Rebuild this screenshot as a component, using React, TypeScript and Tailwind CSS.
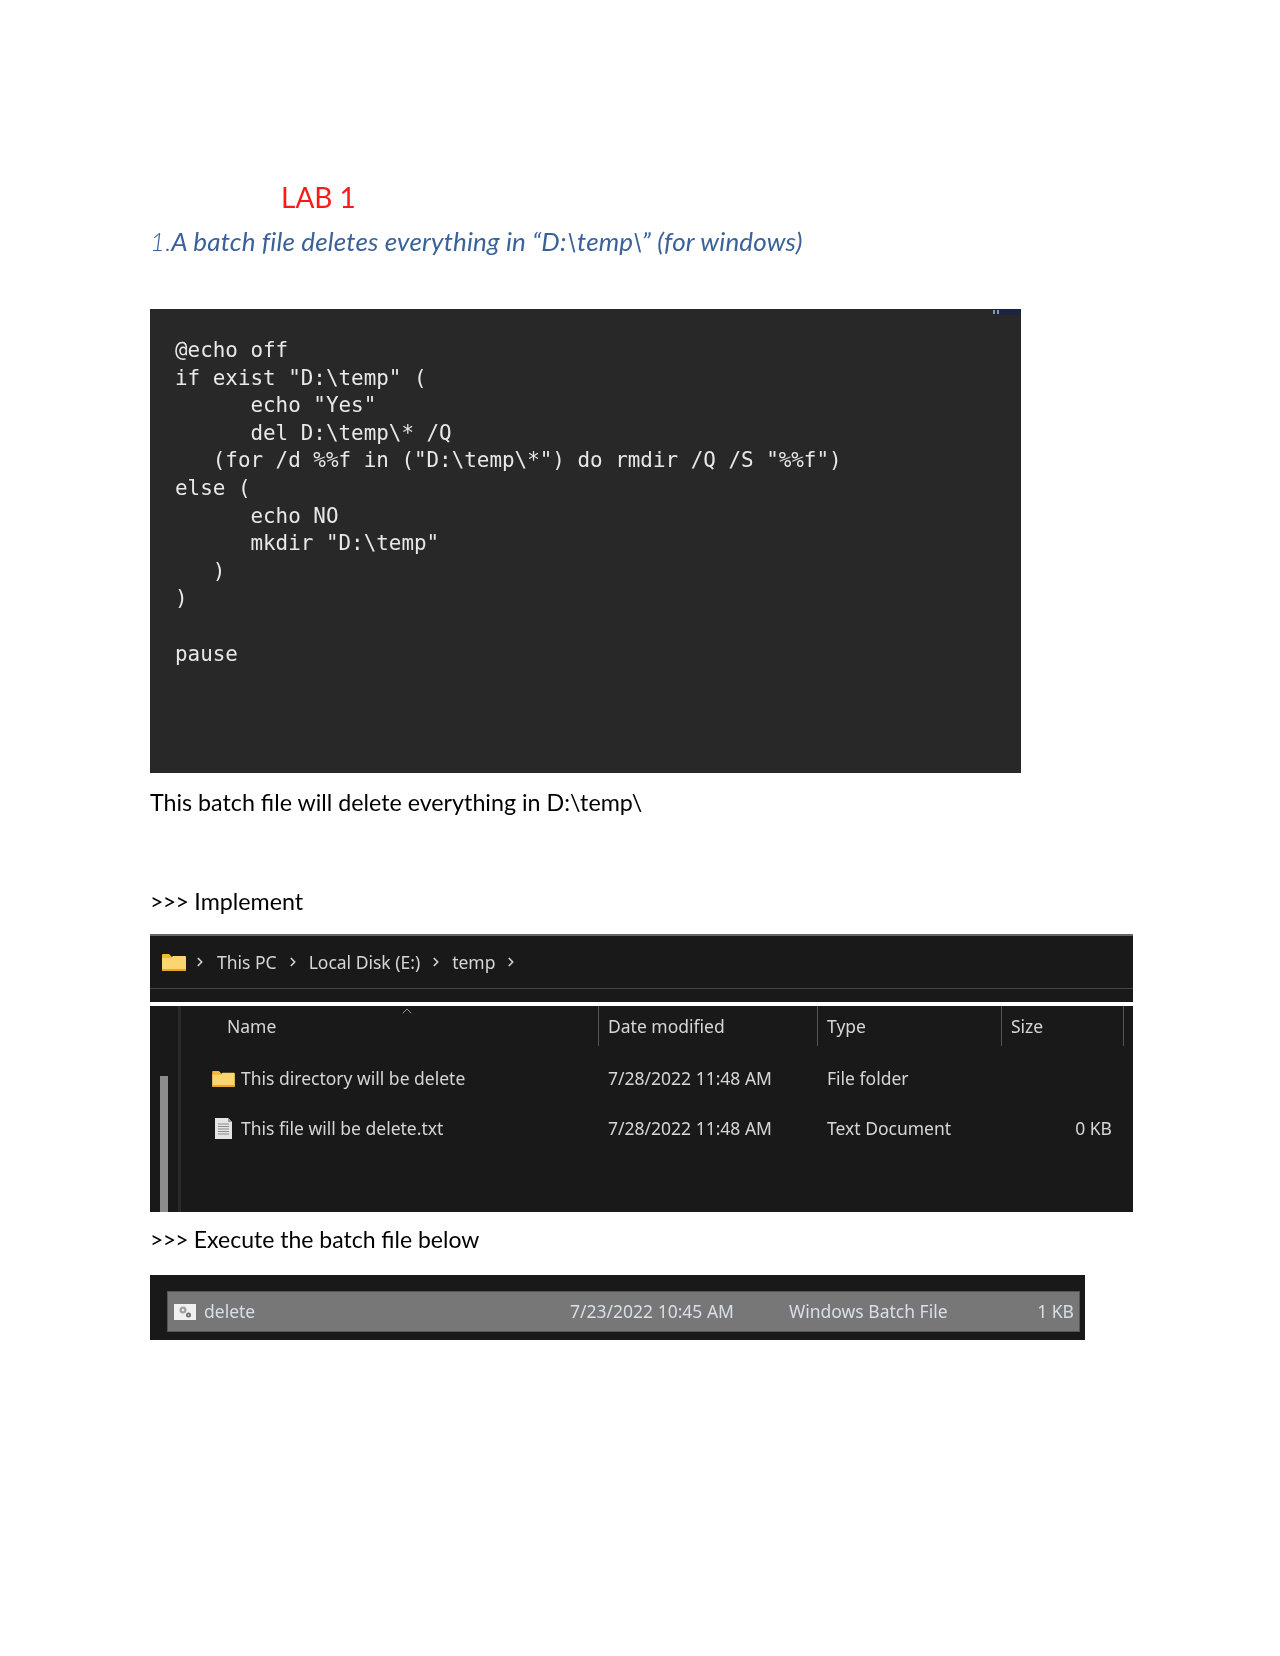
import { ChevronRight, ChevronUp } from "lucide-react";

const code = `@echo off
if exist "D:\\temp" (
      echo "Yes"
      del D:\\temp\\* /Q
   (for /d %%f in ("D:\\temp\\*") do rmdir /Q /S "%%f")
else (
      echo NO
      mkdir "D:\\temp"
   )
)

pause`;

function FolderIcon({ className }: { className: string }) {
  return (
    <svg viewBox="0 0 24 18" className={className}>
      <path d="M0 2 a1 1 0 0 1 1-1 h6 l3 3 v2 H0z" fill="#f5b932" />
      <path d="M0 5 h9 l2-2 h12 a1 1 0 0 1 1 1 v13 a1 1 0 0 1-1 1 H1 a1 1 0 0 1-1-1z" fill="#fdd56f" />
      <path d="M0 16 h24 v1 a1 1 0 0 1-1 1 H1 a1 1 0 0 1-1-1z" fill="#e8a825" />
    </svg>
  );
}

function TextFileIcon() {
  return (
    <svg viewBox="0 0 19 21" className="h-[21px] w-[19px]">
      <path d="M1 0 h13 l4 4 v17 H1z" fill="#e4e4e4" />
      <path d="M14 0 l4 4 h-4z" fill="#9a9a9a" />
      <path d="M4 6 h11 M4 8.500 h11 M4 11 h11 M4 13.500 h11 M4 16 h11" stroke="#8c8c8c" strokeWidth="1" />
    </svg>
  );
}

function BatchIcon() {
  return (
    <svg viewBox="0 0 22 16" className="h-4 w-[22px]">
      <rect width="22" height="16" fill="#f0f0f0" />
      <circle cx="9" cy="6" r="3.500" fill="#a0a0a0" />
      <circle cx="9" cy="6" r="1.200" fill="#f0f0f0" />
      <circle cx="14.500" cy="11" r="2.500" fill="#6a6a6a" />
      <circle cx="14.500" cy="11" r="0.800" fill="#f0f0f0" />
    </svg>
  );
}

function Crumb({ label }: { label: string }) {
  return (
    <>
      <span>{label}</span>
      <ChevronRight className="h-[14px] w-[14px] text-[#d0d0d0]" strokeWidth={3} />
    </>
  );
}

const headerCols = ["Date modified", "Type", "Size"];

export default function App() {
  return (
    <div className="h-[1656px] w-[1280px] bg-white pl-[150px] font-['Lato',sans-serif] text-black blur-[0.4px]">
      <h1 className="pl-[131px] pt-[179px] text-[28px] leading-[36px] font-normal text-[#fb1a1a]">LAB 1</h1>
      <h2 className="mt-[8px] text-[26px] leading-[36px] font-normal tracking-[0.15px] text-[#3a6299] italic">
        <span className="font-light">1.</span>A batch file deletes everything in “D:\temp\” (for windows)
      </h2>

      {/* terminal */}
      <div className="relative mt-[50px] h-[464px] w-[871px] bg-[#282828] pt-[28px] pl-[25px]">
        <div className="absolute top-0 right-0 flex h-[6px] w-[28px] gap-[2px] bg-[#1b2440] pt-[1px]">
          <div className="h-[4px] w-[2px] bg-[#8f98ab]" />
          <div className="h-[4px] w-[2px] bg-[#8f98ab]" />
        </div>
        <pre className="font-['DejaVu_Sans_Mono',monospace] text-[20.900px] leading-[27.600px] text-[#e8e8e8]">{code}</pre>
      </div>

      <p className="mt-[11px] text-[23.250px] leading-[36px]">This batch file will delete everything in D:\temp\</p>
      <p className="mt-[63px] text-[23.250px] leading-[36px]">
        <span className="tracking-[-0.7px]">&gt;&gt;&gt;</span> Implement
      </p>

      {/* explorer window */}
      <div className="mt-[15px] w-[983px] bg-[#191919]">
        <div className="flex h-[54px] items-center gap-[9px] border-t-2 border-[#666666] pl-[12px] font-['Noto_Sans',sans-serif] text-[17.500px] text-[#d6d6d6]">
          <FolderIcon className="h-[18px] w-[24px]" />
          <ChevronRight className="mr-[1px] -ml-[2px] h-[14px] w-[14px] text-[#d0d0d0]" strokeWidth={3} />
          <Crumb label="This PC" />
          <Crumb label="Local Disk (E:)" />
          <Crumb label="temp" />
        </div>
        <div className="h-[14px] border-t border-[#444444]" />
        <div className="h-[4px] bg-white" />
        <div className="flex h-[206px] font-['Noto_Sans',sans-serif] text-[17.500px] text-[#d6d6d6]">
          <div className="flex w-[18px] shrink-0 justify-end pt-[70px]">
            <div className="w-[8px] bg-[#8c8c8c]" />
          </div>
          <div className="ml-[10px] w-[3px] bg-[#2a2a2a]" />
          <div className="flex-1">
            <div className="grid h-[40px] grid-cols-[417px_219px_184px_123px] items-center">
              <div className="relative pl-[46px]">
                Name
                <ChevronUp className="absolute -top-[10px] left-[218px] h-[16px] w-[16px] text-[#9a9a9a]" strokeWidth={1.5} />
              </div>
              {headerCols.map((c) => (
                <div key={c} className="flex h-[40px] items-center border-l border-[#555555] pl-[9px] last:border-r">{c}</div>
              ))}
            </div>
            <div className="mt-[18px] grid h-[28px] grid-cols-[417px_219px_184px_123px] items-center">
              <div className="flex items-center gap-[6px] pl-[31px]">
                <FolderIcon className="h-[17px] w-[23px]" />
                <span>This directory will be delete</span>
              </div>
              <div className="pl-[10px]">7/28/2022 11:48 AM</div>
              <div className="pl-[10px]">File folder</div>
              <div />
            </div>
            <div className="mt-[22px] grid h-[28px] grid-cols-[417px_219px_184px_123px] items-center">
              <div className="flex items-center gap-[8px] pl-[33px]">
                <TextFileIcon />
                <span>This file will be delete.txt</span>
              </div>
              <div className="pl-[10px]">7/28/2022 11:48 AM</div>
              <div className="pl-[10px]">Text Document</div>
              <div className="pr-[12px] text-right">0 KB</div>
            </div>
          </div>
        </div>
      </div>

      <p className="mt-[9px] text-[23px] leading-[36px]">
        <span className="tracking-[-0.7px]">&gt;&gt;&gt;</span> Execute the batch file below
      </p>

      {/* batch file row */}
      <div className="mt-[18px] w-[935px] bg-[#191919] pt-[16px] pr-[5px] pb-[8px] pl-[17px]">
        <div className="flex h-[41px] items-center border border-[#555555] bg-[#777777] font-['Noto_Sans',sans-serif] text-[17.500px] text-[#d8dfe8]">
          <div className="ml-[6px] flex w-[396px] items-center gap-[8px]">
            <BatchIcon />
            <span>delete</span>
          </div>
          <div className="w-[219px]">7/23/2022 10:45 AM</div>
          <div className="flex-1">Windows Batch File</div>
          <div className="pr-[5px]">1 KB</div>
        </div>
      </div>
    </div>
  );
}
